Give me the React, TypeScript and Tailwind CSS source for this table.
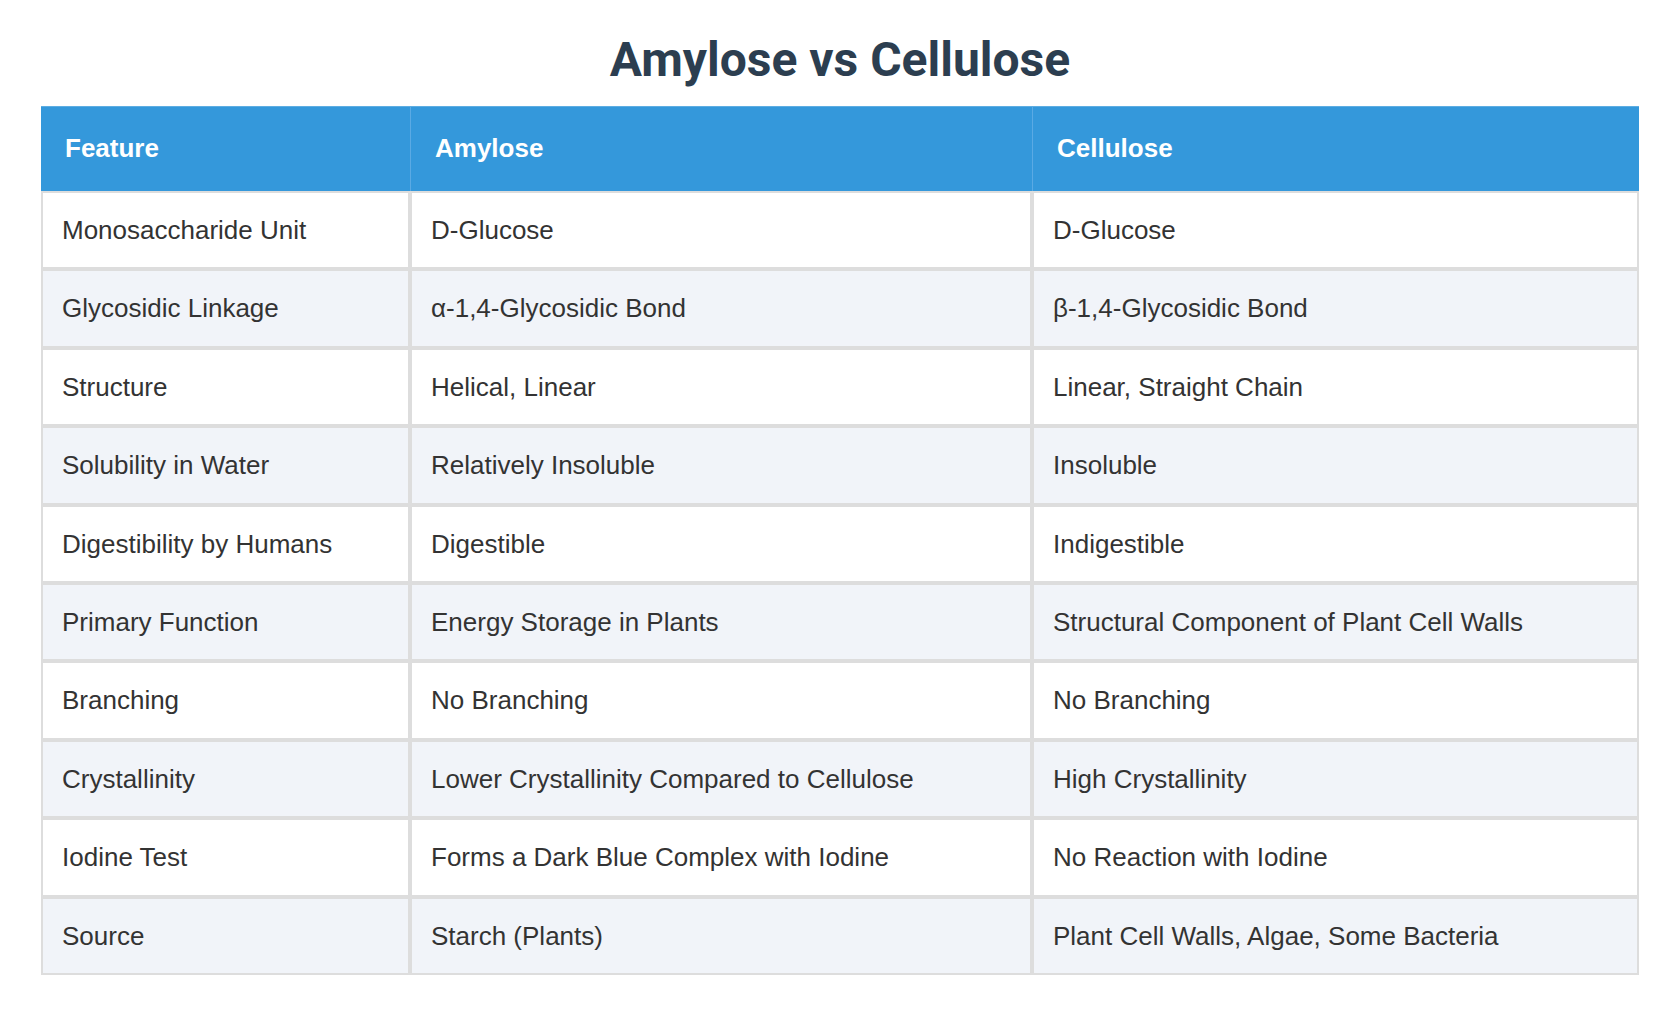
const rows: [string, string, string][] = [
  ['Monosaccharide Unit', 'D-Glucose', 'D-Glucose'],
  ['Glycosidic Linkage', 'α-1,4-Glycosidic Bond', 'β-1,4-Glycosidic Bond'],
  ['Structure', 'Helical, Linear', 'Linear, Straight Chain'],
  ['Solubility in Water', 'Relatively Insoluble', 'Insoluble'],
  ['Digestibility by Humans', 'Digestible', 'Indigestible'],
  ['Primary Function', 'Energy Storage in Plants', 'Structural Component of Plant Cell Walls'],
  ['Branching', 'No Branching', 'No Branching'],
  ['Crystallinity', 'Lower Crystallinity Compared to Cellulose', 'High Crystallinity'],
  ['Iodine Test', 'Forms a Dark Blue Complex with Iodine', 'No Reaction with Iodine'],
  ['Source', 'Starch (Plants)', 'Plant Cell Walls, Algae, Some Bacteria'],
];

const App = () => {
  return (
    <div className="min-h-screen bg-white px-[41px] pt-[36px] font-['Liberation_Sans',Arial,sans-serif] text-[#333]">
      {/* Title */}
      <h1 className="mb-[22px] text-center font-['Roboto',sans-serif] text-[48px] font-bold leading-[48px] text-[#2c3e50]">
        Amylose vs Cellulose
      </h1>

      <table className="w-full border-separate border-spacing-0 text-left text-[26px]">
        <colgroup>
          <col className="w-[369px]" />
          <col className="w-[622px]" />
          <col />
        </colgroup>
        <thead>
          <tr className="bg-[#3498db] text-white">
            {['Feature', 'Amylose', 'Cellulose'].map((h, i) => (
              <th
                key={h}
                className={`border-t border-[#5dade2] px-[24px] pt-[25.5px] pb-[28.5px] font-bold leading-[30px] ${
                  i > 0 ? 'border-l border-l-[#5aaae4]' : ''
                }`}
              >
                {h}
              </th>
            ))}
          </tr>
        </thead>
        <tbody>
          {rows.map((r, idx) => (
            <tr key={r[0]} className={idx % 2 === 1 ? 'bg-[#f1f4f9]' : 'bg-white'}>
              {r.map((c, i) => (
                <td
                  key={i}
                  className="border-2 border-[#dddddd] px-[19px] py-[22px] leading-[30.4px]"
                >
                  {c}
                </td>
              ))}
            </tr>
          ))}
        </tbody>
      </table>
    </div>
  );
};

export default App;
